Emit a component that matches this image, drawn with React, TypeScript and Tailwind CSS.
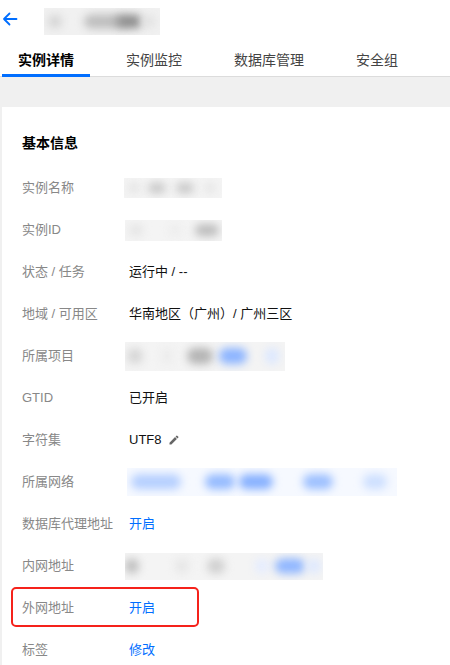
import React from 'react';

type Blob = { x: number; w: number; c: string };

const Smudge: React.FC<{ w: number; h: number; blobs: Blob[]; bg?: string }> = ({ w, h, blobs, bg = '#f4f4f4' }) => (
  <div className="relative overflow-hidden" style={{ width: w, height: h, background: bg }}>
    {blobs.map((b, i) => (
      <div
        key={i}
        className="absolute top-1/2 -translate-y-1/2 rounded-full blur-[4px]"
        style={{ left: b.x, width: b.w, height: h * 0.55, background: b.c }}
      />
    ))}
  </div>
);

const TABS = ['实例详情', '实例监控', '数据库管理', '安全组'];

const Row: React.FC<{ label: string; children: React.ReactNode; boxed?: boolean }> = ({ label, children, boxed }) => (
  <div className="relative flex items-center h-[42px] px-5">
    {boxed && (
      <div className="absolute left-[9px] top-0 w-[188px] h-[40px] border-2 border-[#f5221b] rounded-[5px]" />
    )}
    <div className="w-[107px] shrink-0 text-[13px] text-[#888]">{label}</div>
    <div className="flex items-center text-[13px] text-[#111]">{children}</div>
  </div>
);

const Link: React.FC<{ children: React.ReactNode }> = ({ children }) => (
  <span className="text-[#006eff]">{children}</span>
);

export default function App() {
  return (
    <div
      className="w-[450px] h-[665px] overflow-hidden bg-white"
      style={{ fontFamily: '"Liberation Sans", "Noto Sans CJK SC", sans-serif' }}
    >
      {/* header */}
      <div className="h-[45px] flex items-center">
        <svg className="ml-[2px] mt-[-8px]" width="16" height="16" viewBox="0 0 16 16" fill="none" stroke="#006eff" strokeWidth="1.8" strokeLinecap="round" strokeLinejoin="round">
          <path d="M14.5 8H2M7.5 2.5L2 8l5.5 5.5" />
        </svg>
        <div className="ml-[26px] mt-[-2px]">
          <Smudge
            w={116}
            h={27}
            bg="#f1f1f1"
            blobs={[
              { x: 4, w: 14, c: '#d4d4d4' },
              { x: 40, w: 40, c: '#bdbdbd' },
              { x: 72, w: 26, c: '#8f8f8f' },
              { x: 98, w: 14, c: '#e2e2e2' },
            ]}
          />
        </div>
      </div>

      {/* tabs */}
      <div className="h-[32px] flex gap-5 pl-[2px] border-b border-[#dcdcdc]">
        {TABS.map((t, i) => (
          <div
            key={t}
            className={
              i === 0
                ? 'px-4 flex items-start pt-[5px] text-[14px] font-bold text-black border-b-[3px] border-[#006eff] -mb-px'
                : 'px-4 flex items-start pt-[5px] text-[14px] text-[#444]'
            }
          >
            {t}
          </div>
        ))}
      </div>

      {/* body */}
      <div className="bg-[#f0f0f0] pt-[30px] pl-[2px]">
        <div className="bg-white pb-10">
          <div className="px-5 pt-[26px] pb-[14px] text-[14px] leading-[20px] font-bold text-black">基本信息</div>

          <Row label="实例名称">
            <div className="-ml-[5px]">
              <Smudge w={98} h={20} blobs={[{ x: 4, w: 12, c: '#e4e4e4' }, { x: 24, w: 18, c: '#c9c9c9' }, { x: 52, w: 18, c: '#c9c9c9' }, { x: 80, w: 12, c: '#e6e6e6' }]} />
            </div>
          </Row>
          <Row label="实例ID">
            <div className="-ml-[4px]">
              <Smudge w={97} h={21} blobs={[{ x: 4, w: 14, c: '#e4e4e4' }, { x: 44, w: 12, c: '#ececec' }, { x: 70, w: 24, c: '#bcbcbc' }]} />
            </div>
          </Row>
          <Row label="状态 / 任务">运行中 / --</Row>
          <Row label="地域 / 可用区">华南地区（广州）/ 广州三区</Row>
          <Row label="所属项目">
            <div className="-ml-[4px]">
              <Smudge w={160} h={29} blobs={[{ x: 2, w: 16, c: '#d6d6d6' }, { x: 36, w: 12, c: '#ececec' }, { x: 62, w: 26, c: '#b4b4b4' }, { x: 94, w: 28, c: '#8cb4ff' }, { x: 140, w: 14, c: '#dbe7ff' }]} />
            </div>
          </Row>
          <Row label="GTID">已开启</Row>
          <Row label="字符集">
            <span>UTF8</span>
            <svg className="ml-[6px]" width="12" height="12" viewBox="0 0 24 24" fill="#666">
              <path d="M3 17.25V21h3.75L17.81 9.94l-3.75-3.75L3 17.25zM20.71 7.04a1 1 0 000-1.41l-2.34-2.34a1 1 0 00-1.41 0l-1.83 1.83 3.75 3.75 1.83-1.83z" />
            </svg>
          </Row>
          <Row label="所属网络">
            <div className="-ml-[2px]">
              <Smudge w={270} h={28} bg="#f6f9ff" blobs={[{ x: 4, w: 50, c: '#b5cfff' }, { x: 78, w: 30, c: '#94baff' }, { x: 112, w: 34, c: '#86b0ff' }, { x: 176, w: 30, c: '#9cbfff' }, { x: 236, w: 24, c: '#cddfff' }]} />
            </div>
          </Row>
          <Row label="数据库代理地址">
            <Link>开启</Link>
          </Row>
          <Row label="内网地址">
            <div className="-ml-[4px]">
              <Smudge w={198} h={27} blobs={[{ x: 0, w: 14, c: '#bdbdbd' }, { x: 50, w: 14, c: '#e6e6e6' }, { x: 82, w: 18, c: '#cfcfcf' }, { x: 130, w: 14, c: '#e4ecff' }, { x: 150, w: 30, c: '#8fb6ff' }, { x: 182, w: 14, c: '#dde8ff' }]} />
            </div>
          </Row>
          <Row label="外网地址" boxed>
            <Link>开启</Link>
          </Row>
          <Row label="标签">
            <Link>修改</Link>
          </Row>
        </div>
      </div>
    </div>
  );
}
